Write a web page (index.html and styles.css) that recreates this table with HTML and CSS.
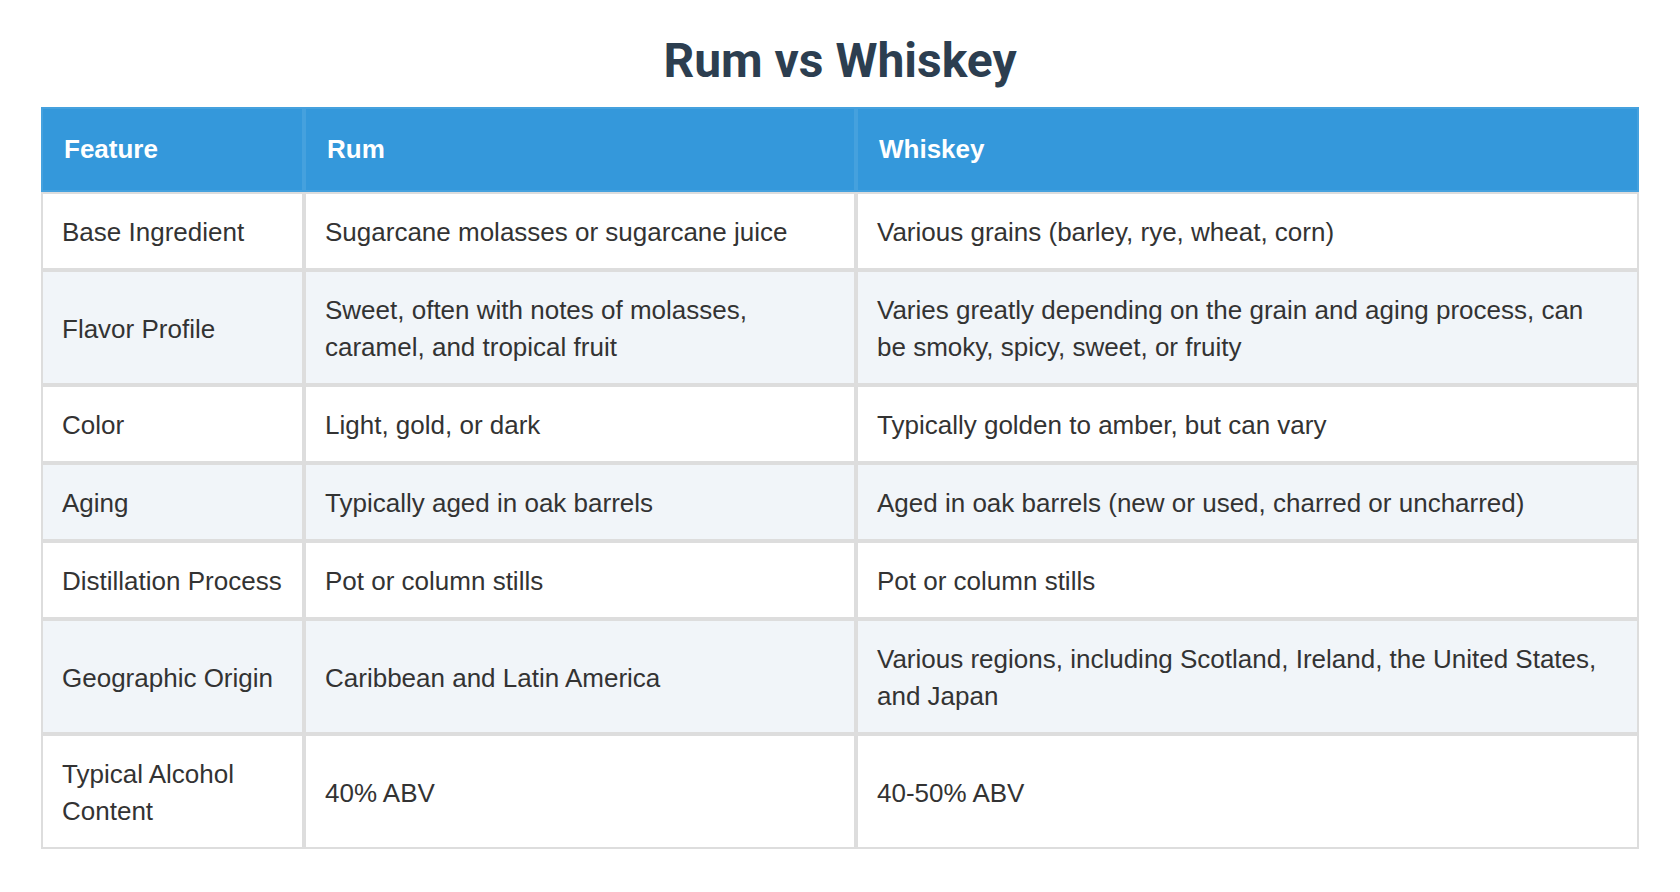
FILE: index.html
```html
<!DOCTYPE html>
<html lang="en">
<head>
<meta charset="utf-8">
<title>Rum vs Whiskey</title>
<link rel="stylesheet" href="styles.css">
</head>
<body>
<main class="page">
  <h1 class="title">Rum vs Whiskey</h1>
  <table class="compare">
    <colgroup>
      <col class="col-feature">
      <col class="col-rum">
      <col class="col-whiskey">
    </colgroup>
    <thead>
      <tr>
        <th>Feature</th>
        <th>Rum</th>
        <th>Whiskey</th>
      </tr>
    </thead>
    <tbody>
      <tr>
        <td>Base Ingredient</td>
        <td>Sugarcane molasses or sugarcane juice</td>
        <td>Various grains (barley, rye, wheat, corn)</td>
      </tr>
      <tr>
        <td>Flavor Profile</td>
        <td>Sweet, often with notes of molasses, caramel, and tropical fruit</td>
        <td>Varies greatly depending on the grain and aging process, can be smoky, spicy, sweet, or fruity</td>
      </tr>
      <tr>
        <td>Color</td>
        <td>Light, gold, or dark</td>
        <td>Typically golden to amber, but can vary</td>
      </tr>
      <tr>
        <td>Aging</td>
        <td>Typically aged in oak barrels</td>
        <td>Aged in oak barrels (new or used, charred or uncharred)</td>
      </tr>
      <tr>
        <td>Distillation Process</td>
        <td>Pot or column stills</td>
        <td>Pot or column stills</td>
      </tr>
      <tr>
        <td>Geographic Origin</td>
        <td>Caribbean and Latin America</td>
        <td>Various regions, including Scotland, Ireland, the United States, and Japan</td>
      </tr>
      <tr>
        <td>Typical Alcohol Content</td>
        <td>40% ABV</td>
        <td>40-50% ABV</td>
      </tr>
    </tbody>
  </table>
</main>
</body>
</html>
```

FILE: styles.css
```css
html, body {
  margin: 0;
  padding: 0;
  background: #ffffff;
}

.page {
  padding: 33px 41px 40px 41px;
  font-family: "Liberation Sans", Arial, sans-serif;
  color: #333333;
}

.title {
  margin: 0 0 18px 0;
  text-align: center;
  font-family: Roboto, "Liberation Sans", sans-serif;
  font-weight: 700;
  font-size: 48px;
  line-height: 56px;
  color: #2c3e50;
}

.compare {
  width: 1598px;
  table-layout: fixed;
  border-collapse: separate;
  border-spacing: 0;
  font-size: 26px;
  line-height: 37px;
}

.col-feature { width: 263px; }
.col-rum { width: 552px; }
.col-whiskey { width: 783px; }

.compare th {
  background: #3498db;
  color: #ffffff;
  font-weight: 700;
  text-align: left;
  padding: 22px 21px;
  border: 2px solid #45a1de;
}

.compare td {
  padding: 20px 19px 17px 19px;
  border: 2px solid #dddddd;
  vertical-align: middle;
  text-align: left;
}

.compare tbody tr:nth-child(even) td {
  background: #f1f5f9;
}
```
